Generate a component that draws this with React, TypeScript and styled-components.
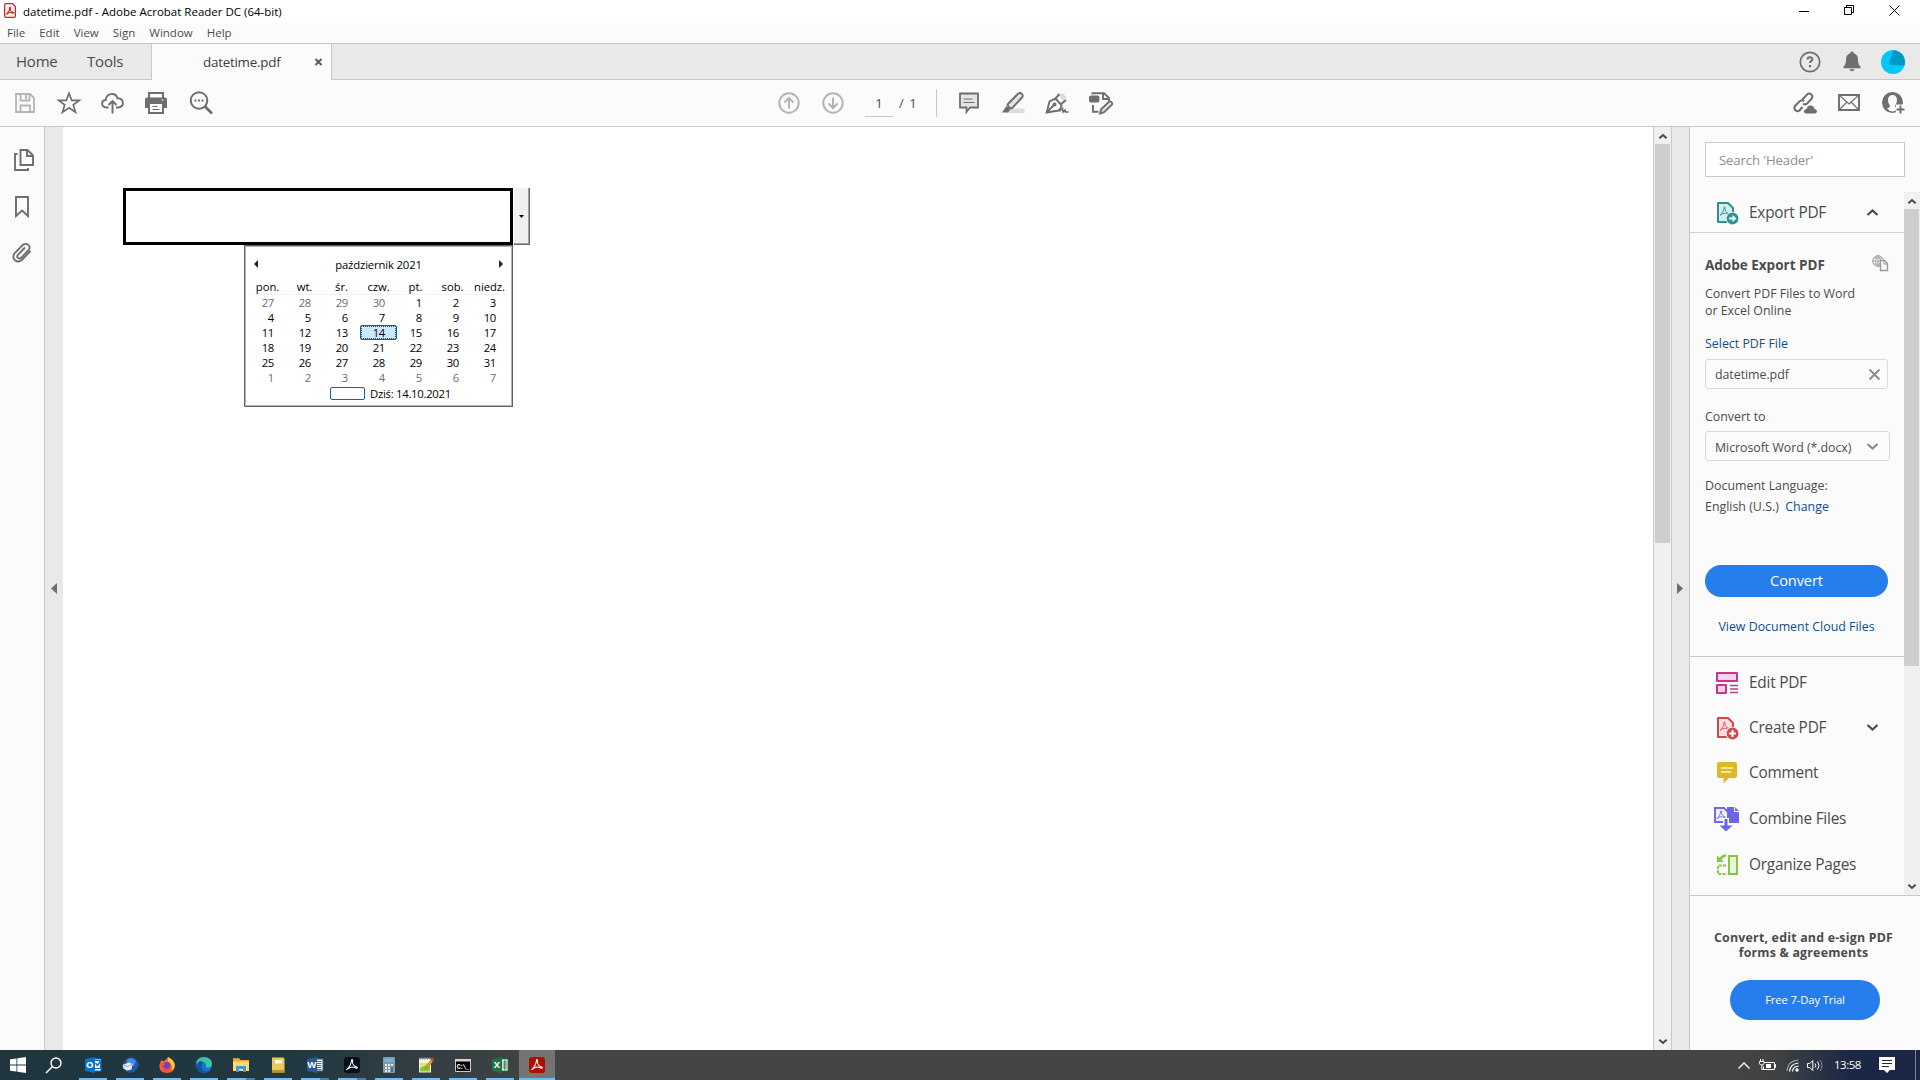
import React from 'react';
import styled, { createGlobalStyle } from 'styled-components';

const GlobalStyle = createGlobalStyle`
  * {
    box-sizing: border-box;
  }
  body {
    margin: 0;
    overflow: hidden;
    font-family: 'Open Sans', 'Noto Sans', sans-serif;
    color: #4b4b4b;
  }
`;

const Window = styled.div`
  width: 1920px;
  height: 1080px;
  display: flex;
  flex-direction: column;
  background: #fbfbfb;
  white-space: nowrap;
`;

const Icon = styled.svg`
  display: block;
  flex: none;
  overflow: visible;
`;

/* ---------- title and menu ---------- */

const TitleBar = styled.div`
  height: 23px;
  flex: none;
  display: flex;
  align-items: center;
  padding: 0 20px 2px 4px;
  background: #fff;
  color: #000;
  font-size: 11.5px;
`;

const TitleText = styled.span`
  margin-left: 7px;
  line-height: 20px;
  padding-top: 2px;
`;

const WindowButtons = styled.div`
  margin-left: auto;
  display: flex;
  gap: 34px;
`;

const MenuBar = styled.div`
  height: 20px;
  flex: none;
  display: flex;
  gap: 14px;
  padding-left: 7px;
  font-size: 11.5px;
  line-height: 19px;
`;

/* ---------- tabs ---------- */

const TabBar = styled.div`
  height: 37px;
  flex: none;
  display: flex;
  align-items: stretch;
  background: #e9e9e9;
  border-top: 1px solid #c8c8c8;
  border-bottom: 1px solid #c8c8c8;
`;

const Tab = styled.div<{ $left: number; $width: number }>`
  width: ${props => props.$width}px;
  padding-left: ${props => props.$left}px;
  line-height: 35px;
  font-size: 15px;
  letter-spacing: -0.2px;
`;

const DocumentTab = styled.div`
  width: 181px;
  height: 36px;
  display: flex;
  align-items: center;
  padding: 0 9px 1px 51px;
  background: #fbfbfb;
  border-left: 1px solid #c8c8c8;
  border-right: 1px solid #c8c8c8;
  font-size: 13.4px;
  letter-spacing: -0.25px;
  color: #3c3c3c;
`;

const TabClose = styled(Icon)`
  margin-left: auto;
`;

const AccountArea = styled.div`
  margin-left: auto;
  padding-right: 6px;
  display: flex;
`;

const IconCell = styled.div<{ $w?: number; $h?: number }>`
  width: ${props => props.$w || 44}px;
  height: ${props => props.$h || 46}px;
  flex: none;
  display: flex;
  align-items: center;
  justify-content: center;
`;

/* ---------- toolbar ---------- */

const Toolbar = styled.div`
  height: 47px;
  flex: none;
  display: flex;
  align-items: center;
  padding: 0 5px 0 3px;
  border-bottom: 1px solid #c8c8c8;
`;

const ToolGroup = styled.div`
  display: flex;
`;

const PageTools = styled.div`
  display: flex;
  align-items: center;
  margin-left: 544px;
`;

const PageInput = styled.div`
  width: 28px;
  height: 27px;
  margin-left: 10px;
  border-bottom: 1px solid #c8c8c8;
  text-align: center;
  font-size: 13px;
  line-height: 26px;
`;

const PageCount = styled.div`
  margin-left: 6px;
  width: 37px;
  font-size: 13px;
  line-height: 26px;
  letter-spacing: -0.4px;
  padding-bottom: 1px;
`;

const Divider = styled.div`
  width: 1px;
  height: 28px;
  margin-right: 10px;
  background: #c8c8c8;
`;

const RightTools = styled(ToolGroup)`
  margin-left: auto;
`;

/* ---------- main area ---------- */

const Main = styled.div`
  flex: 1;
  min-height: 0;
  display: flex;
`;

const Rail = styled.div`
  width: 45px;
  display: flex;
  flex-direction: column;
  align-items: center;
  padding-top: 10px;
  border-right: 1px solid #c8c8c8;
`;

const Strip = styled.div<{ $w: number; $bordered?: boolean }>`
  width: ${props => props.$w}px;
  padding: ${props => (props.$bordered ? '0 1px 1px 0' : '0 0 1px')};
  display: flex;
  align-items: center;
  justify-content: center;
  background: #e9e9e9;
  border: solid #c8c8c8;
  border-width: ${props => (props.$bordered ? '0 1px' : '0')};
`;

const DocumentView = styled.div`
  flex: 1;
  padding: 61px 0 0 60px;
  background: #fff;
`;

const ScrollTrack = styled.div<{ $divided?: boolean }>`
  width: ${props => (props.$divided ? 18 : 16)}px;
  display: flex;
  flex-direction: column;
  background: #f0f0f0;
  border-left: ${props => (props.$divided ? '1px solid #c8c8c8' : 'none')};
  padding: 0 1px 0 ${props => (props.$divided ? 1 : 0)}px;
`;

const ScrollArrow = styled.div`
  height: 17px;
  display: flex;
  align-items: center;
  justify-content: center;

  &:first-child {
    padding-top: 1px;
  }
`;

const ScrollThumb = styled.div<{ $h: number }>`
  height: ${props => props.$h}px;
  margin-bottom: auto;
  background: #cdcdcd;
`;

/* ---------- date field ---------- */

const DateField = styled.div`
  display: flex;
  height: 57px;
`;

const DateInput = styled.div`
  width: 390px;
  border: 3px solid #000;
`;

const DropButton = styled.div`
  width: 16px;
  margin-left: 1px;
  display: flex;
  align-items: center;
  justify-content: center;
  background: #f0f0f0;
  border-right: 1px solid #696969;
  border-bottom: 1px solid #696969;
  box-shadow: inset -1px -1px #a0a0a0;
`;

const Calendar = styled.div`
  width: 269px;
  height: 162px;
  margin-left: 121px;
  padding: 0 4px;
  border: 1px solid #646464;
  box-shadow: inset 0 0 0 1px #b4b4b4;
  color: #000;
  font-size: 11.3px;
`;

const CalendarHeader = styled.div`
  height: 33px;
  display: flex;
  align-items: center;
  justify-content: space-between;
  padding: 4px 5px 0 5px;
  letter-spacing: -0.15px;
`;

const HeaderArrow = styled.div`
  padding-bottom: 2px;
`;

const CalendarGrid = styled.div`
  display: grid;
  grid-template-columns: repeat(7, 37px);
`;

const WeekDay = styled.div`
  height: 16px;
  line-height: 15px;
  text-align: center;
  letter-spacing: -0.05px;
  border-bottom: 1px solid #f3f3f3;
`;

const Day = styled.div<{ $muted?: boolean; $selected?: boolean }>`
  height: 15px;
  padding-right: 12px;
  line-height: 15px;
  text-align: right;
  letter-spacing: -0.3px;
  color: ${props => (props.$muted ? '#6d6d6d' : '#000')};
  ${props =>
    props.$selected &&
    `
    padding: 1px 11px 0 0;
    line-height: 11px;
    background: #cce8ff;
    border: 1px solid #0a63a8;
    border-radius: 2px;
    outline: 1px dotted #24485f;
    outline-offset: -2px;
  `}
`;

const Today = styled.div`
  height: 16px;
  display: flex;
  align-items: center;
  gap: 5px;
  padding-left: 81px;
  letter-spacing: -0.27px;
`;

const TodayBox = styled.div`
  width: 35px;
  height: 13px;
  border: 1px solid #0f66a8;
  border-radius: 2px;
`;

/* ---------- tools pane ---------- */

const Pane = styled.div`
  width: 230px;
  display: flex;
  flex-direction: column;
`;

const SearchBox = styled.div`
  width: 200px;
  height: 35px;
  flex: none;
  margin: 15px 0 15px 15px;
  padding-left: 13px;
  border: 1px solid #c8c8c8;
  background: #fff;
  color: #8e8e8e;
  font-size: 13.2px;
  line-height: 34px;
  letter-spacing: -0.15px;
`;

const PaneScroll = styled.div`
  height: 703px;
  flex: none;
  display: flex;
`;

const PaneBody = styled.div`
  width: 214px;
`;

const ToolItem = styled.div<{ $h: number }>`
  height: ${props => props.$h}px;
  display: flex;
  align-items: center;
  padding: 0 26px 0 26px;
  font-size: 15.4px;
  letter-spacing: -0.24px;
  color: #4b4b4b;
`;

const ToolLabel = styled.span`
  margin-left: 10px;
  padding-bottom: 1px;
  flex: 1;
`;

const ExportHeader = styled.div`
  height: 41px;
  border-bottom: 1px solid #d2d2d2;
`;

const ExportSection = styled.div`
  height: 424px;
  padding: 22px 16px 0 15px;
  border-bottom: 1px solid #c8c8c8;
  font-size: 12.4px;
  line-height: 17px;
`;

const ExportTitle = styled.div`
  height: 21px;
  display: flex;
  justify-content: space-between;
  font-size: 13.5px;
  font-weight: 700;
  line-height: 21px;
`;

const Paragraph = styled.div<{ $top: number }>`
  margin-top: ${props => props.$top}px;
`;

const Link = styled.span`
  color: #0d4f91;
`;

const FieldBox = styled.div<{ $w: number; $top: number; $right: number }>`
  width: ${props => props.$w}px;
  height: 30px;
  margin-top: ${props => props.$top}px;
  padding: 0 ${props => props.$right}px 0 9px;
  display: flex;
  align-items: center;
  justify-content: space-between;
  border: 1px solid #dadada;
  border-radius: 3px;
  letter-spacing: -0.05px;
`;

const FieldText = styled.span`
  padding-top: 2px;
`;

const ConvertButton = styled.div`
  width: 183px;
  height: 32px;
  margin-top: 50px;
  border-radius: 16px;
  background: #257eeb;
  color: #fff;
  font-size: 14.6px;
  line-height: 31px;
  letter-spacing: -0.1px;
  text-align: center;
`;

const CloudLink = styled(Link)`
  display: block;
  width: 183px;
  margin-top: 21px;
  text-align: center;
`;

const ToolList = styled.div`
  padding-top: 3px;
`;

const Promo = styled.div`
  flex: 1;
  border-top: 1px solid #c8c8c8;
  padding-top: 34px;
  display: flex;
  flex-direction: column;
  align-items: center;
  text-align: center;
`;

const PromoText = styled.div`
  margin-right: 3px;
  font-size: 12.4px;
  font-weight: 700;
  line-height: 15px;
  letter-spacing: 0.2px;
`;

const TrialButton = styled.div`
  width: 150px;
  height: 40px;
  margin-top: 20px;
  border-radius: 20px;
  background: #257eeb;
  color: #fff;
  font-size: 11.3px;
  line-height: 39px;
  letter-spacing: -0.15px;
`;

/* ---------- taskbar ---------- */

const Taskbar = styled.div`
  height: 30px;
  flex: none;
  display: flex;
  align-items: center;
  background: linear-gradient(90deg, #20363f 0, #223840 300px, #454545 570px, #454545 1720px, #3e4143 1780px, #1b2845 1850px, #1a2643 1920px);
`;

const StartArea = styled.div`
  width: 74px;
  display: flex;
  align-items: center;
  padding-left: 10px;
  gap: 19px;
`;

const TaskItem = styled.div<{ $active?: boolean; $stacked?: boolean }>`
  width: ${props => (props.$active ? 36 : 37)}px;
  height: 30px;
  margin-left: ${props => (props.$active ? 1 : 0)}px;
  display: flex;
  align-items: center;
  justify-content: center;
  position: relative;
  background: ${props => (props.$active ? '#747474' : 'transparent')};

  &::after {
    content: '';
    position: absolute;
    left: ${props => (props.$active ? 0 : 5)}px;
    right: ${props => (props.$active ? 0 : 4)}px;
    bottom: 0;
    height: 2px;
    background: ${props => (props.$stacked ? 'linear-gradient(90deg, #76b9ed 19px, #4a7fa8 19px)' : '#76b9ed')};
  }
`;

const Tray = styled.div`
  margin-left: auto;
  display: flex;
  align-items: center;
  color: #fff;
  font-size: 11.5px;
`;

const Clock = styled.span`
  width: 28px;
  margin: 0 17px 0 10px;
  padding-bottom: 1px;
  letter-spacing: -0.5px;
`;

const ShowDesktop = styled.div`
  width: 5px;
  height: 30px;
  margin-left: 20px;
  border-left: 1px solid #7c8496;
`;

const G = '#6e6e6e';

const Chevron = ({ up, w = 11, color = '#4b4b4b', stroke = 2.2 }: { up?: boolean; w?: number; color?: string; stroke?: number }) => (
  <Icon width={w} height={7} viewBox="0 0 11 7" fill="none" stroke={color} strokeWidth={stroke}>
    <path d={up ? 'M.5 6l5-4.500 5 4.500' : 'M.5 1l5 4.500L10.500 1'} />
  </Icon>
);

const Triangle = ({ left, w, h, color }: { left?: boolean; w: number; h: number; color: string }) => (
  <Icon width={w} height={h} viewBox="0 0 6 10" preserveAspectRatio="none" fill={color}>
    <path d={left ? 'M6 0v10L0 5z' : 'M0 0v10l6-5z'} />
  </Icon>
);

// three-lobed ribbon used by every Acrobat icon, drawn in a 16px box
const RIBBON = 'M3 12.500C5 11 7.500 6.500 7.600 3.500C7.500 1.800 9 2 8.700 3.800C8.200 7 10.500 9.500 13 10.200C14.500 10.800 13.500 12 12 11.200C9 9.700 6 10.200 4 12C2.800 13.200 2 13 3 12.500z';

const FileIcon = ({ color, tint, badge }: { color: string; tint: string; badge: 'arrow' | 'plus' }) => (
  <Icon width={23} height={24} viewBox="0 0 23 24">
    <path d="M2 2h10l5 5v14H2z" fill={tint} stroke={color} strokeWidth="2" strokeLinejoin="round" />
    <path d={RIBBON} transform="translate(2 4) scale(.8)" fill="none" stroke={color} strokeWidth="1.100" />
    <circle cx="16.500" cy="17.500" r="6.800" fill="#fbfbfb" />
    <circle cx="16.500" cy="17.500" r="5.900" fill={color} />
    {badge === 'arrow' ? (
      <path d="M13 16.600h3.500V14l4 3.500-4 3.500v-2.600H13z" fill="#fff" />
    ) : (
      <path d="M16.500 14v7M13 17.500h7" stroke="#fff" strokeWidth="2" />
    )}
  </Icon>
);

const AppLogo = ({ bg, fg }: { bg: string; fg: string }) => (
  <Icon width={16} height={16} viewBox="0 0 16 16">
    <rect width="16" height="16" rx="3" fill={bg} />
    <path d={RIBBON} transform="translate(.2 .2) scale(.96)" fill="none" stroke={fg} strokeWidth="1.150" />
  </Icon>
);

const OfficeIcon = ({ color, letter, children }: { color: string; letter: string; children: React.ReactNode }) => (
  <Icon width={16} height={16} viewBox="0 0 16 16">
    <path d="M8 2h8v12H8z" fill="#fff" stroke={color} />
    {children}
    <path d="M0 2l10-2v16L0 14z" fill={color} />
    <text x="4.800" y="11.300" fontSize="9.500" fontWeight="700" textAnchor="middle" fill="#fff">
      {letter}
    </text>
  </Icon>
);

const weekDays = ['pon.', 'wt.', 'śr.', 'czw.', 'pt.', 'sob.', 'niedz.'];

const days = Array.from({ length: 42 }, (_, i) => {
  if (i < 4) return { day: 27 + i, muted: true };
  if (i < 35) return { day: i - 3, muted: false };
  return { day: i - 34, muted: true };
});

const TopBars: React.FC = () => (
  <>
    <TitleBar>
      <Icon width={12} height={15} viewBox="0 0 12 15">
        <path d="M2 .6h6.500L11.400 3.500V13q0 1.400-1.400 1.400H2Q.6 14.400.6 13V2Q.6.6 2 .6z" fill="#fff4f2" stroke="#c9291c" strokeWidth="1.200" />
        <path d={RIBBON} transform="translate(.5 2.500) scale(.68)" fill="none" stroke="#c9291c" strokeWidth="1.500" />
      </Icon>
      <TitleText>datetime.pdf - Adobe Acrobat Reader DC (64-bit)</TitleText>
      <WindowButtons>
        <Icon width={11} height={11} viewBox="0 0 11 11" stroke="#000">
          <path d="M0 6.500h10" />
        </Icon>
        <Icon width={11} height={11} viewBox="0 0 11 11" fill="none" stroke="#000">
          <path d="M.5 2.500h7v7h-7zM2.500 2.500v-2h7v7h-2" />
        </Icon>
        <Icon width={11} height={11} viewBox="0 0 11 11" stroke="#000">
          <path d="M.5.5l10 10M10.500.5l-10 10" />
        </Icon>
      </WindowButtons>
    </TitleBar>
    <MenuBar>
      {['File', 'Edit', 'View', 'Sign', 'Window', 'Help'].map(item => (
        <span key={item}>{item}</span>
      ))}
    </MenuBar>
    <TabBar>
      <Tab $left={16} $width={72}>Home</Tab>
      <Tab $left={15} $width={79}>Tools</Tab>
      <DocumentTab>
        datetime.pdf
        <TabClose width={7} height={8} viewBox="0 0 7 8" stroke="#5a5a5a" strokeWidth={2}>
          <path d="M.5 1l6 6M6.500 1l-6 6" />
        </TabClose>
      </DocumentTab>
      <AccountArea>
        <IconCell $w={42} $h={35}>
          <Icon width={22} height={22} viewBox="0 0 22 22" fill="none" stroke={G} strokeWidth={2}>
            <circle cx="11" cy="11" r="9.700" strokeWidth="1.700" />
            <path d="M8.500 8.300c.3-3 5.300-2.500 4.800.2-.3 1.500-2.300 1.700-2.300 3.500M11 14v2.200" />
          </Icon>
        </IconCell>
        <IconCell $w={41} $h={35}>
          <Icon width={18} height={21} viewBox="0 0 18 21" fill={G}>
            <path d="M9 .5c1.200 0 1.700.8 1.800 1.800 3 .8 4.200 3.200 4.200 6.200 0 4 .8 5.500 2.500 7v1.700H.5v-1.700C2.200 14 3 12.500 3 8.500c0-3 1.200-5.400 4.200-6.200C7.300 1.300 7.800.5 9 .5zM6.500 18.200h5Q11 20.300 9 20.300T6.500 18.200z" />
          </Icon>
        </IconCell>
        <IconCell $w={42} $h={35}>
          <Icon width={24} height={24} viewBox="0 0 24 24">
            <circle cx="12" cy="12" r="12" fill="#00c8fa" />
            <path d="M12.500.2L7.500 14.500l16 1A12 12 0 0 0 12.500.2z" fill="#0099c6" />
          </Icon>
        </IconCell>
      </AccountArea>
    </TabBar>
  </>
);

const MainToolbar: React.FC = () => (
  <Toolbar>
    <ToolGroup>
      <IconCell>
        <Icon width={20} height={20} viewBox="0 0 20 20" fill="none" stroke="#b4b4b4" strokeWidth={1.8}>
          <path d="M1 1h14l4 4v14H1zM5.500 1v6.500h9V1M5.500 19v-6.500h9.500V19" />
          <path d="M11 2v4" />
        </Icon>
      </IconCell>
      <IconCell>
        <Icon width={24} height={24} viewBox="0 0 24 24" fill="none" stroke={G} strokeWidth={1.700}>
          <path d="M12 2.300l2.700 7h7.600l-6 4.600 2.200 7.400-6.500-4.400-6.500 4.400 2.200-7.400-6-4.600h7.600z" />
        </Icon>
      </IconCell>
      <IconCell>
        <Icon width={24} height={22} viewBox="0 0 24 22" fill="none" stroke={G} strokeWidth={1.900}>
          <path d="M7.500 15.500H5.500C-.2 15-.2 8.500 4.800 8 5 1.200 14.500-.3 16.500 6.300c7-.5 7.200 9.200.5 9.200h-2" />
          <path d="M11.500 21.500V9.500M7.500 13l4-4 4 4" />
        </Icon>
      </IconCell>
      <IconCell $w={42}>
        <Icon width={22} height={22} viewBox="0 0 22 22">
          <path d="M4 6V1h14v5" fill="none" stroke={G} strokeWidth="2" />
          <path d="M2 5.500h18q2 0 2 2V16h-4v-5H4v5H0V7.500q0-2 2-2z" fill={G} />
          <path d="M4 11h14v10H4z" fill="#fbfbfb" stroke={G} strokeWidth="2" />
          <path d="M7.500 14.500h5M7.500 17.500h7" stroke={G} />
          <path d="M16.500 8h2" stroke="#fff" />
        </Icon>
      </IconCell>
      <IconCell $w={46}>
        <Icon width={23} height={24} viewBox="0 0 23 24" fill="none" stroke={G} strokeWidth={2}>
          <circle cx="10" cy="9.500" r="8.300" />
          <path d="M16 15.500l7 7" strokeWidth="2.800" />
          <path d="M5.500 9.500h2M9 9.500h2M12.500 9.500h2" />
        </Icon>
      </IconCell>
    </ToolGroup>
    <PageTools>
      <IconCell>
        <Icon width={22} height={22} viewBox="0 0 22 22" fill="none" stroke="#b4b4b4" strokeWidth={2}>
          <circle cx="11" cy="11" r="9.700" />
          <path d="M11 16.500V6M6.500 10.500L11 6l4.500 4.500" />
        </Icon>
      </IconCell>
      <IconCell>
        <Icon width={22} height={22} viewBox="0 0 22 22" fill="none" stroke="#b4b4b4" strokeWidth={2}>
          <circle cx="11" cy="11" r="9.700" />
          <path d="M11 5.500V16M6.500 11.500L11 16l4.500-4.500" />
        </Icon>
      </IconCell>
      <PageInput>1</PageInput>
      <PageCount>/&nbsp; 1</PageCount>
      <Divider />
      <IconCell>
        <Icon width={20} height={22} viewBox="0 0 20 22" fill="#e4e4e4" stroke={G} strokeWidth={1.800}>
          <path d="M1 1.500h18v14h-8l-3.500 4.500v-4.500H1z" />
          <path d="M4.500 7h9M4.500 10.500h11" strokeWidth="1.200" />
        </Icon>
      </IconCell>
      <IconCell>
        <Icon width={24} height={22} viewBox="0 0 24 22">
          <path d="M6 16.500h17.500V21H6z" fill="#dcdcdc" />
          <path d="M6.500 12.500L17 1.800q2-1.800 4 .2 1.500 1.800 0 3.500L11 16.200q-3 .8-4.500-3.700z" fill="#e4e4e4" stroke={G} strokeWidth="1.900" />
          <path d="M5.500 14l4 3.500-2.500 3H1z" fill={G} />
        </Icon>
      </IconCell>
      <IconCell>
        <Icon width={24} height={23} viewBox="0 0 24 23" fill="none" stroke={G} strokeWidth={1.900}>
          <path d="M14 3l4-1.500 3.500 4L18 9z" fill="#d8d8d8" stroke="none" />
          <path d="M1.700 20.500L4.500 9.500q3.500-2.500 6.500-2.500l5.500 6q-.5 4-3 5.500z" />
          <path d="M9.500 7.500L14.500 2M15.500 12.500L21 8M2 20l7-7" />
          <circle cx="9.500" cy="12.500" r="1" />
          <path d="M14 19.500l3.500-3 .5 3.500 2-2 .5 2h3" strokeWidth="1.600" />
        </Icon>
      </IconCell>
      <IconCell>
        <Icon width={24} height={23} viewBox="0 0 24 23" fill="none" stroke={G} strokeWidth={1.900}>
          <rect x="1" y="4.500" width="8.500" height="5" rx="1" fill={G} />
          <path d="M3.500 2.500V1.300h11.500L20 6v3M4 13v6.700h5.500M14 1.500V7h5" />
          <path d="M11 21.500l1.200-4.200 8-7.800q1.200-.5 2.300.7t.6 2.200l-8 7.700z" fill="#e4e4e4" />
        </Icon>
      </IconCell>
    </PageTools>
    <RightTools>
      <IconCell>
        <Icon width={24} height={22} viewBox="0 0 24 22" fill="none" stroke={G} strokeWidth={2}>
          <path d="M9.500 7.500l4.800-5.200q2-1.600 4 .2t.4 4L14 11.700q-2 1.500-3.800-.2" />
          <path d="M9.500 15l-3 3.500q-2 1.500-4-.3t-.5-4.200L7 9q2-1.500 4 .3" />
          <path d="M13 21.500q-2.500-.5-2-2.800.7-1.700 2.700-1.600.7-4 4.500-3.500 3 .6 3.200 3.400 2.400 0 2.600 2.200 0 2-2 2.300z" fill={G} stroke="none" />
        </Icon>
      </IconCell>
      <IconCell>
        <Icon width={22} height={18} viewBox="0 0 22 18" fill="none" stroke={G} strokeWidth={1.900}>
          <path d="M1 1h20v15H1z" />
          <path d="M1.500 1.500L11 10l9.500-8.500M1.500 15.500l7-7M20.500 15.500l-7-7" strokeWidth="1.200" />
        </Icon>
      </IconCell>
      <IconCell>
        <Icon width={23} height={22} viewBox="0 0 23 22">
          <circle cx="10.500" cy="10.500" r="10.500" fill={G} />
          <path d="M10.500 3c3 0 4.500 2 4.500 5s-1.500 4.800-2 6c0 1.200 1.500 1.800 3 2.400q-2.300 3-5.500 3T5 16.400c1.500-.6 3-1.200 3-2.400-.5-1.200-2-3-2-6s1.500-5 4.500-5z" fill="#fbfbfb" />
          <path d="M14 12.500h9V22h-9z" fill="#fbfbfb" />
          <path d="M18.500 13.500v8M14.500 17.500h8" stroke={G} strokeWidth="1.900" />
        </Icon>
      </IconCell>
    </RightTools>
  </Toolbar>
);

const DatePicker: React.FC = () => (
  <>
    <DateField>
      <DateInput />
      <DropButton>
        <Icon width={5} height={3} viewBox="0 0 5 3">
          <path d="M0 0h5L2.500 3z" />
        </Icon>
      </DropButton>
    </DateField>
    <Calendar>
      <CalendarHeader>
        <HeaderArrow>
          <Triangle left w={4} h={8} color="#222" />
        </HeaderArrow>
        październik 2021
        <HeaderArrow>
          <Triangle w={4} h={8} color="#222" />
        </HeaderArrow>
      </CalendarHeader>
      <CalendarGrid>
        {weekDays.map(name => (
          <WeekDay key={name}>{name}</WeekDay>
        ))}
        {days.map(({ day, muted }, i) => (
          <Day key={i} $muted={muted} $selected={day === 14}>
            {day}
          </Day>
        ))}
      </CalendarGrid>
      <Today>
        <TodayBox />
        Dziś: 14.10.2021
      </Today>
    </Calendar>
  </>
);

const ToolsPane: React.FC = () => (
  <Pane>
    <SearchBox>Search 'Header'</SearchBox>
    <PaneScroll>
      <PaneBody>
        <ExportHeader>
          <ToolItem $h={41}>
            <FileIcon color="#2d9091" tint="#d3ecec" badge="arrow" />
            <ToolLabel>Export PDF</ToolLabel>
            <Chevron up />
          </ToolItem>
        </ExportHeader>
        <ExportSection>
          <ExportTitle>
            Adobe Export PDF
            <Icon width={16} height={16} viewBox="0 0 16 16" fill="none" stroke="#999">
              <circle cx="6" cy="6" r="5.300" />
              <path d="M.5 6h11M6 .5v11M1.500 3h9M1.500 9h9M6 .5q-5 5.500 0 11M6 .5q5 5.500 0 11" strokeWidth=".8" />
              <path d="M8.500 5.500h4l3 3v7h-7z" fill="#fbfbfb" strokeWidth="1.400" />
              <path d="M12 5.500v3.500h3.500" />
            </Icon>
          </ExportTitle>
          <Paragraph $top={9}>
            Convert PDF Files to Word
            <br />
            or Excel Online
          </Paragraph>
          <Paragraph $top={16}>
            <Link>Select PDF File</Link>
          </Paragraph>
          <FieldBox $w={183} $top={7} $right={7}>
            datetime.pdf
            <Icon width={11} height={11} viewBox="0 0 11 11" stroke="#8a8a8a" strokeWidth={1.800}>
              <path d="M.5.5l10 10M10.500.5l-10 10" />
            </Icon>
          </FieldBox>
          <Paragraph $top={19}>Convert to</Paragraph>
          <FieldBox $w={185} $top={6} $right={11}>
            <FieldText>Microsoft Word (*.docx)</FieldText>
            <Chevron color="#8a8a8a" />
          </FieldBox>
          <Paragraph $top={16}>Document Language:</Paragraph>
          <Paragraph $top={4}>
            English (U.S.)&nbsp; <Link>Change</Link>
          </Paragraph>
          <ConvertButton>Convert</ConvertButton>
          <CloudLink>View Document Cloud Files</CloudLink>
        </ExportSection>
        <ToolList>
          <ToolItem $h={45}>
            <Icon width={23} height={22} viewBox="0 0 23 22" fill="#f7d2e8" stroke="#c4388c" strokeWidth={2}>
              <path d="M1 1h20v8H1zM1 13h9v8H1z" strokeLinejoin="round" />
              <path d="M14 13.500h8M14 17h8M14 20.500h8" strokeWidth="1.300" />
            </Icon>
            <ToolLabel>Edit PDF</ToolLabel>
          </ToolItem>
          <ToolItem $h={45}>
            <FileIcon color="#d7454e" tint="#fae0e1" badge="plus" />
            <ToolLabel>Create PDF</ToolLabel>
            <Chevron />
          </ToolItem>
          <ToolItem $h={46}>
            <Icon width={23} height={22} viewBox="0 0 23 22">
              <path d="M3 0h16q2 0 2 2v12q0 2-2 2h-6l-5.500 5.500V16H3q-2 0-2-2V2q0-2 2-2z" fill="#dcb927" />
              <path d="M5 6h12M5 10h10" stroke="#fff6c4" strokeWidth="1.500" />
            </Icon>
            <ToolLabel>Comment</ToolLabel>
          </ToolItem>
          <ToolItem $h={46}>
            <Icon width={23} height={24} viewBox="1 0 23 24">
              <path d="M12 0h7v5h5v11H12z" fill="#6b66e8" />
              <path d="M20 0v4h4z" fill="#6b66e8" />
              <path d="M0 1h9l4 4v10H0z" fill="#f0effd" stroke="#6b66e8" strokeWidth="1.900" />
              <path d={RIBBON} transform="translate(0 2) scale(.75)" fill="none" stroke="#6b66e8" strokeWidth="1.200" />
              <path d="M8 11h6v8H8z" fill="#fbfbfb" />
              <path d="M9.500 12h3v6.500h5L11 24.500 4.500 18.500h5z" fill="#6b66e8" />
            </Icon>
            <ToolLabel>Combine Files</ToolLabel>
          </ToolItem>
          <ToolItem $h={46}>
            <Icon width={23} height={22} viewBox="0 0 23 22" fill="none" stroke="#82c842" strokeWidth={2}>
              <path d="M13 2h8v18h-8z" fill="#e7f6da" />
              <path d="M10 11.500H2V20h9" strokeDasharray="3 1.200" />
              <path d="M10 1.500Q6.500 1.500 4.500 5" strokeWidth="2.600" />
              <path d="M1 1.500v6.500h7z" fill="#82c842" stroke="none" />
            </Icon>
            <ToolLabel>Organize Pages</ToolLabel>
          </ToolItem>
        </ToolList>
      </PaneBody>
      <ScrollTrack>
        <ScrollArrow>
          <Chevron up w={8} stroke={2.900} />
        </ScrollArrow>
        <ScrollThumb $h={457} />
        <ScrollArrow>
          <Chevron w={8} stroke={2.900} />
        </ScrollArrow>
      </ScrollTrack>
    </PaneScroll>
    <Promo>
      <PromoText>
        Convert, edit and e-sign PDF
        <br />
        forms &amp; agreements
      </PromoText>
      <TrialButton>Free 7-Day Trial</TrialButton>
    </Promo>
  </Pane>
);

const SystemTaskbar: React.FC = () => (
  <Taskbar>
    <StartArea>
      <Icon width={16} height={16} viewBox="0 0 16 16" fill="#fff">
        <path d="M0 2.300l6.500-.9v6.200H0zM7.300 1.300L16 0v7.600H7.300zM0 8.400h6.500v6.200L0 13.700zM7.300 8.400H16V16l-8.700-1.300z" />
      </Icon>
      <Icon width={17} height={17} viewBox="0 0 17 17" fill="none" stroke="#fff" strokeWidth={1.400}>
        <circle cx="11" cy="6" r="5" />
        <path d="M7.500 9.500L1 16" />
      </Icon>
    </StartArea>
    <TaskItem>
      <OfficeIcon color="#0b72c6" letter="O">
        <path d="M9 3.500h6.500v8H9z" fill="#fff" stroke="#0b72c6" />
        <path d="M10.500 6l2 2.500L15.500 4" fill="none" stroke="#0b72c6" strokeWidth="1.400" />
      </OfficeIcon>
    </TaskItem>
    <TaskItem>
      <Icon width={16} height={16} viewBox="0 0 16 16">
        <path d="M3 3Q9-2 14 2.500t1 9.500-9 3.500Q0 13 1 8z" fill="#2456a8" />
        <path d="M5 2.500Q10-.5 14 4l-2 5-7-2z" fill="#3f8fe0" />
        <path d="M.5 8l6-2.500 4 1.500-1 5.500-4.500 1-3.500-2z" fill="#e9eef5" />
        <path d="M1.500 8L6 9.500l4-2.500" fill="none" stroke="#8fa4bd" />
      </Icon>
    </TaskItem>
    <TaskItem>
      <Icon width={16} height={16} viewBox="0 0 16 16">
        <path d="M2.500 3l1.500 1.500Q7 3 9 0q5 3 6.500 6.500 1.500 9-7.500 9.500Q-.5 15 .5 8 1 5 2.500 3z" fill="#ff6a2b" />
        <path d="M9 0q5.500 2.500 6.500 7t-2.500 6q1-6-4-8.500z" fill="#ffc83c" />
        <circle cx="7.800" cy="8.500" r="3.700" fill="#7542c9" />
        <path d="M1 6q3-1 5.500 1.500-2.500 0-3 2Q4 12 8 12l4-1Q11 15.500 7 15.500T1 6z" fill="#ff4c3b" />
      </Icon>
    </TaskItem>
    <TaskItem>
      <Icon width={16} height={16} viewBox="0 0 16 16">
        <circle cx="8" cy="8" r="8" fill="#1776c8" />
        <path d="M0 7Q1 0 8 0t8 6.500Q16 10.500 12 10.500q-3 0-2-2Q10 5 5.500 5 2 5 0 7z" fill="#38c6a5" />
        <path d="M5.500 8q-1 5.500 4.500 6.500l4-1.500Q11 16 8 16-1 14.500 1 8t7-2.500Q5.500 6 5.500 8z" fill="#0d55a5" />
      </Icon>
    </TaskItem>
    <TaskItem $stacked>
      <Icon width={16} height={16} viewBox="0 0 16 16">
        <path d="M0 1.500h6L7.500 3H16v11H0z" fill="#ffd870" />
        <path d="M0 1.500h6L7.500 3H16v1.500H0z" fill="#eea827" />
        <path d="M3 15V9h10v6h-3v-3H6v3z" fill="#3e9bdc" />
      </Icon>
    </TaskItem>
    <TaskItem>
      <Icon width={14} height={16} viewBox="0 0 14 16">
        <path d="M1 .5h11q1.500 0 1.500 1.500v13.500H1z" fill="#e8c95c" />
        <path d="M1 13h12.500v2.500H1z" fill="#b89327" />
        <path d="M4 3h7v3.500H4z" fill="#fff9dd" />
      </Icon>
    </TaskItem>
    <TaskItem $stacked>
      <OfficeIcon color="#2a5699" letter="W">
        <path d="M10 4.500h4.500M10 6.500h4.500M10 8.500h4.500M10 10.500h4.500M10 12.500h4.500" stroke="#2a5699" strokeWidth=".9" />
      </OfficeIcon>
    </TaskItem>
    <TaskItem $stacked>
      <AppLogo bg="#050e1c" fg="#fff" />
    </TaskItem>
    <TaskItem>
      <Icon width={12} height={16} viewBox="0 0 12 16">
        <rect width="12" height="16" rx="1" fill="#8a959c" />
        <path d="M1.500 1.500h9V5h-9z" fill="#6fb8de" />
        <path d="M2 7h2v2H2zM5 7h2v2H5zM8 7h2v2H8zM2 10h2v2H2zM5 10h2v2H5zM2 13h2v2H2zM5 13h2v2H5z" fill="#e3e9ec" />
        <path d="M8 10h2v5H8z" fill="#2a7fb8" />
      </Icon>
    </TaskItem>
    <TaskItem>
      <Icon width={16} height={16} viewBox="0 0 16 16">
        <path d="M1 1.500h12v14H1z" fill="#f1f5ea" />
        <path d="M2 6.500h10v8H2z" fill="#8cc63e" />
        <path d="M2 6.500h10L2 11z" fill="#d9e96f" />
        <path d="M2 0v2.500M4.500 0v2.500M7 0v2.500M9.500 0v2.500M12 0v2.500" stroke="#777" />
        <path d="M7 12l1-3 6-7.500 2 1.500-6 7.500z" fill="#e8a32c" stroke="#8d5a14" strokeWidth=".5" />
        <path d="M13 3l2-3 1.500 1.500-1.500 3z" fill="#c33d32" />
      </Icon>
    </TaskItem>
    <TaskItem>
      <Icon width={16} height={13} viewBox="0 0 16 13">
        <path d="M.5.500h15v12H.5z" fill="#000" stroke="#c9c9c9" />
        <path d="M0 0h16v2.500H0z" fill="#d5d5d5" />
        <text x="1.800" y="9.600" fontSize="6.500" fontWeight="700" fill="#fff" fontFamily="Liberation Mono, monospace" textLength="12.500">
          C:\_
        </text>
      </Icon>
    </TaskItem>
    <TaskItem>
      <OfficeIcon color="#1f7244" letter="X">
        <path d="M10.500 5h4.500M10.500 7h4.500M10.500 9h4.500M10.500 11h4.500M12.800 3v10" stroke="#1f7244" strokeWidth=".9" />
      </OfficeIcon>
    </TaskItem>
    <TaskItem $active>
      <AppLogo bg="#b30b00" fg="#fff" />
    </TaskItem>
    <Tray>
      <Icon width={12} height={7} viewBox="0 0 12 7" fill="none" stroke="#fff" strokeWidth={1.300}>
        <path d="M.5 6.500L6 1l5.500 5.500" />
      </Icon>
      <Icon width={36} height={12} viewBox="-9 0 36 12" fill="none" stroke="#fff">
        <path d="M5 3.500h10.500v7H4.500v-3M15.500 5.500h1v3h-1" />
        <path d="M7 5h5v4H7z" fill="#fff" stroke="none" />
        <path d="M1.500 0v2M4 0v2M.5 2.500h4.500v2q0 1.500-2.200 1.500T.5 4.500zM2.800 6v4.500h2" />
      </Icon>
      <Icon width={13} height={13} viewBox="0 0 13 13" fill="none" stroke="#fff" strokeWidth={1.200}>
        <path d="M1 12Q1.500 2 12.500 1" stroke="#aaa" />
        <path d="M3.500 12.500Q4 5 12.500 4M6.500 12.500Q7 7.500 12.500 7" />
        <circle cx="11" cy="11" r="1.700" fill="#fff" stroke="none" />
      </Icon>
      <Icon width={25} height={13} viewBox="-8 0 25 13" fill="none" stroke="#fff">
        <path d="M.5 4.500h2.300l3-3v10l-3-3H.5z" />
        <path d="M8 4.500q1.500 2 0 4M10.500 2.500q3 4 0 8" />
        <path d="M13 1q4 5.500 0 11" stroke="#8a8f99" />
      </Icon>
      <Clock>13:58</Clock>
      <Icon width={16} height={16} viewBox="0 0 16 16">
        <path d="M0 0h16v13h-5l-3 3-3-3H0z" fill="#fff" />
        <path d="M3 3.500h10M3 6.500h10M3 9.500h7" stroke="#1b2845" />
      </Icon>
      <ShowDesktop />
    </Tray>
  </Taskbar>
);

const App: React.FC = () => {
  return (
    <Window>
      <GlobalStyle />
      <TopBars />
      <MainToolbar />
      <Main>
        <Rail>
          <IconCell>
            <Icon width={23} height={22} viewBox="-3 0 23 22" fill="none" stroke={G} strokeWidth={1.900}>
              <path d="M6.500 1h7L19 6.500V16H6.500zM13 1.500V7h5.500M3.500 5H1v16h13v-2" />
            </Icon>
          </IconCell>
          <IconCell>
            <Icon width={14} height={22} viewBox="0 -1 14 22" fill="none" stroke={G} strokeWidth={1.900}>
              <path d="M1 1h12v19l-6-5.500L1 20z" />
            </Icon>
          </IconCell>
          <IconCell>
            <Icon width={20} height={21} viewBox="0 0 20 21" fill="none" stroke={G} strokeWidth={1.800}>
              <path d="M18.500 9l-8.700 9q-3.500 3-6.800.2T2.800 11L11 2.800q2.700-2 5.200.1t.5 5L9 16q-1.500 1.200-3 0t-.3-3L13 5.500" />
            </Icon>
          </IconCell>
        </Rail>
        <Strip $w={18}>
          <Triangle left w={6} h={11} color="#6e6e6e" />
        </Strip>
        <DocumentView>
          <DatePicker />
        </DocumentView>
        <ScrollTrack $divided>
          <ScrollArrow>
            <Chevron up w={8} stroke={2.900} />
          </ScrollArrow>
          <ScrollThumb $h={399} />
          <ScrollArrow>
            <Chevron w={8} stroke={2.900} />
          </ScrollArrow>
        </ScrollTrack>
        <Strip $w={19} $bordered>
          <Triangle w={6} h={11} color="#6e6e6e" />
        </Strip>
        <ToolsPane />
      </Main>
      <SystemTaskbar />
    </Window>
  );
};

export default App;
